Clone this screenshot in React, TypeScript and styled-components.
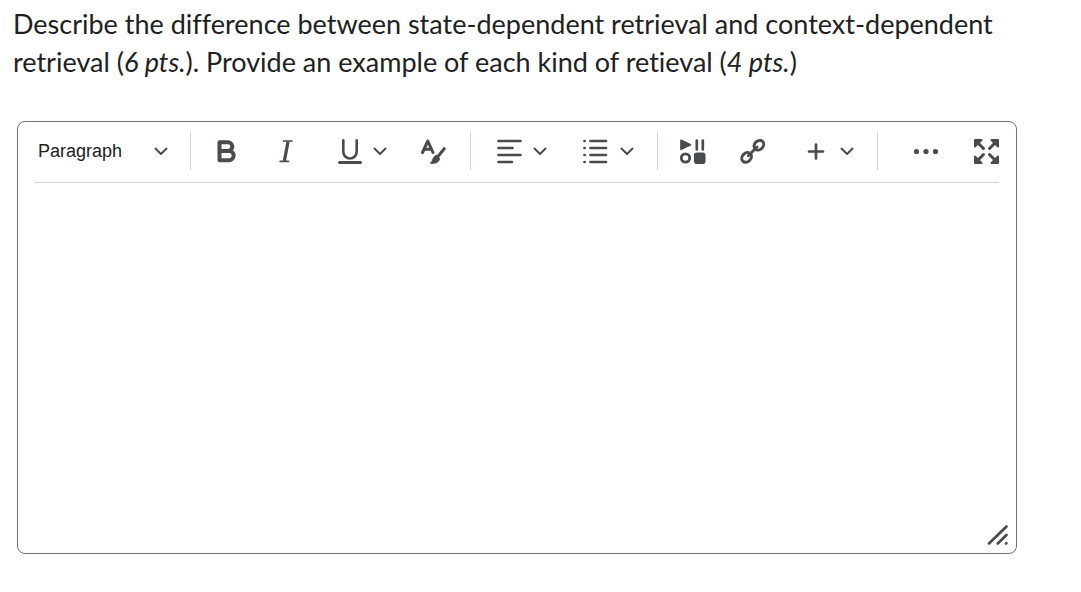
import React from "react";
import styled, { createGlobalStyle } from "styled-components";

const ink = "#494c4e";
const rule = "#cdd5dc";

const GlobalStyle = createGlobalStyle`
  *, *::before, *::after { box-sizing: border-box; }
  body {
    margin: 0;
    background: #ffffff;
    color: #202122;
    font-family: Lato, "Open Sans", sans-serif;
  }
`;

const Page = styled.main`
  padding: 5px 64px 38px 13px;
`;

const Question = styled.p`
  margin: 0;
  font-size: 27px;
  line-height: 38px;
  font-variant-ligatures: none;
`;

const Editor = styled.section`
  position: relative;
  margin: 40px 0 0 4px;
  border: 1px solid #6e7477;
  border-radius: 8px;
  background: #ffffff;
`;

const Toolbar = styled.div`
  display: flex;
  align-items: center;
  height: 60px;
  padding-bottom: 2px;
`;

const Group = styled.div<{ $end?: boolean }>`
  display: flex;
  align-items: center;
  margin-left: ${(p) => (p.$end ? "auto" : "0")};
`;

const Separator = styled.span`
  width: 1px;
  height: 38px;
  margin: 0 5px 0 7px;
  background: ${rule};
`;

const FormatField = styled.label`
  display: grid;
  align-items: center;
  width: 165px;
  color: ${ink};

  > * {
    grid-area: 1 / 1;
  }

  svg {
    justify-self: end;
    margin-right: 15px;
    pointer-events: none;
  }
`;

const FormatSelect = styled.select`
  appearance: none;
  width: 100%;
  height: 42px;
  padding: 0 36px 0 20px;
  border: 0;
  background: transparent;
  color: #202122;
  font-family: "Liberation Sans", Arial, sans-serif;
  font-size: 18px;
`;

const ToolButton = styled.button<{ $menu?: boolean }>`
  display: flex;
  align-items: center;
  gap: 11px;
  width: ${(p) => (p.$menu ? "87px" : "60px")};
  height: 42px;
  padding: 0 0 0 ${(p) => (p.$menu ? "20px" : "17px")};
  border: 0;
  background: transparent;
  color: ${ink};
  cursor: pointer;
`;

const Glyph = styled.svg`
  display: block;
  flex: none;
  fill: none;
  stroke: currentColor;
  stroke-width: 2;
  stroke-linecap: round;
  stroke-linejoin: round;
`;

const Divider = styled.hr`
  height: 1px;
  margin: 0 17px;
  border: 0;
  background: ${rule};
`;

const Answer = styled.textarea`
  display: block;
  width: 100%;
  min-height: 370px;
  padding: 16px 20px;
  border: 0;
  border-radius: 8px;
  outline: 0;
  resize: none;
  background: transparent;
  color: inherit;
  font: inherit;
  font-size: 20px;
`;

const ResizeHandle = styled.button`
  position: absolute;
  right: 7px;
  bottom: 6px;
  padding: 0;
  border: 0;
  background: transparent;
  color: ${ink};
  cursor: ns-resize;
`;

const Chevron = () => (
  <Glyph width="14" height="26" viewBox="0 0 14 26" aria-hidden="true">
    <path d="M1.500 10.500 7 16l5.500-5.500" />
  </Glyph>
);

const Icon = ({ children }: { children: React.ReactNode }) => (
  <Glyph width="26" height="26" viewBox="0 0 26 26" aria-hidden="true">
    {children}
  </Glyph>
);

const Tool = ({ label, menu, children }: { label: string; menu?: boolean; children: React.ReactNode }) => (
  <ToolButton type="button" aria-label={label} aria-haspopup={menu ? "menu" : undefined} $menu={menu}>
    <Icon>{children}</Icon>
    {menu && <Chevron />}
  </ToolButton>
);

export default function App() {
  return (
    <>
      <GlobalStyle />
      <Page>
        <Question id="question">
          Describe the difference between state-dependent retrieval and context-dependent retrieval (
          <em>6 pts.</em>). Provide an example of each kind of retieval (<em>4 pts.</em>)
        </Question>
        <Editor>
          <Toolbar role="toolbar" aria-label="Formatting">
            <FormatField>
              <FormatSelect aria-label="Format" defaultValue="Paragraph">
                <option>Paragraph</option>
              </FormatSelect>
              <Chevron />
            </FormatField>
            <Separator />
            <Group>
              <Tool label="Bold">
                <path
                  d="M6.500 4.300H15a3.900 3.900 0 0 1 0 8.600H6.500zM6.500 12.900H16a4.400 4.400 0 0 1 0 9.300H6.500z"
                  strokeWidth="4"
                />
              </Tool>
              <Tool label="Italic">
                <path d="M10.500 3h8.500M7.200 23.300h8.300" strokeWidth="1.700" />
                <path d="M15 3.500 11.400 23" strokeWidth="3.200" strokeLinecap="butt" />
              </Tool>
              <Tool label="Underline" menu>
                <path d="M7.300 2.300v11.500a6.700 6.700 0 0 0 13.400 0V2.300" strokeWidth="2.600" />
                <path d="M3.500 24.500h21" strokeWidth="3" />
              </Tool>
              <Tool label="Text color and font">
                <path d="M2.500 14.500 7.800 3 13 14.500M4.300 11.200h6.900" strokeWidth="3" />
                <path d="M24.200 10.700 18 18.500" strokeWidth="3" />
                <path
                  d="M16.200 17.300 19.600 20.300C19.200 24.800 15 26 10.200 25.200 13.500 23 12 18.800 16.200 17.300z"
                  fill="currentColor"
                  strokeWidth=".8"
                />
              </Tool>
            </Group>
            <Separator />
            <Group>
              <Tool label="Alignment" menu>
                <path d="M2.500 3h22M2.500 10h14M2.500 17h22M2.500 24h13.500" strokeWidth="2.700" />
              </Tool>
              <Tool label="Lists" menu>
                <path d="M7.500 3H23M7.500 10H23M7.500 17H23M7.500 24H23" strokeWidth="2.700" />
                <path d="M1.500 3h.2M1.500 10h.2M1.500 17h.2M1.500 24h.2" strokeWidth="2.700" />
              </Tool>
            </Group>
            <Separator />
            <Group>
              <Tool label="Insert stuff">
                <path d="M1 2.300v9L10.500 6.800z" fill="currentColor" strokeWidth="1.700" />
                <path d="M16.800 2.500v9M22.800 2.500v9" strokeWidth="2.700" />
                <circle cx="5.500" cy="20" r="4.200" strokeWidth="2.800" />
                <rect x="14" y="14.500" width="11.500" height="11.500" rx="2.800" fill="currentColor" stroke="none" />
              </Tool>
              <Tool label="Insert link">
                <ellipse cx="18.900" cy="7.200" rx="5.300" ry="4.300" transform="rotate(-45 18.900 7.200)" strokeWidth="3" />
                <ellipse cx="6.600" cy="19.400" rx="5.300" ry="4.300" transform="rotate(-45 6.600 19.400)" strokeWidth="3" />
                <path d="m8.300 17.700 8.700-8.800" strokeWidth="2.800" />
              </Tool>
              <Tool label="Insert" menu>
                <path d="M13 6.500v14M6 13.500h14" strokeWidth="2.700" />
              </Tool>
            </Group>
            <Separator />
            <Group $end>
              <Tool label="More actions">
                <g fill="currentColor" stroke="none">
                  <circle cx="3.500" cy="13.500" r="2.600" />
                  <circle cx="13" cy="13.500" r="2.600" />
                  <circle cx="22.500" cy="13.500" r="2.600" />
                </g>
              </Tool>
              <Tool label="Full screen">
                <path
                  d="M2 2h6.500L2 8.500zM25 2v6.500L18.500 2zM2 25v-6.500L8.500 25zM25 25h-6.500l6.500-6.500z"
                  fill="currentColor"
                />
                <path d="m4 4 6.500 6.500M23 4l-6.500 6.500M4 23l6.500-6.500M23 23l-6.500-6.500" strokeWidth="3" />
              </Tool>
            </Group>
          </Toolbar>
          <Divider />
          <Answer aria-labelledby="question" />
          <ResizeHandle type="button" aria-label="Resize editor">
            <Glyph width="24" height="24" viewBox="0 0 24 24" aria-hidden="true">
              <path d="M4 20.500 21.500 3.500M12.800 20.500 21.500 12M21 20.500l.4-.4" strokeWidth="2.700" />
            </Glyph>
          </ResizeHandle>
        </Editor>
      </Page>
    </>
  );
}
